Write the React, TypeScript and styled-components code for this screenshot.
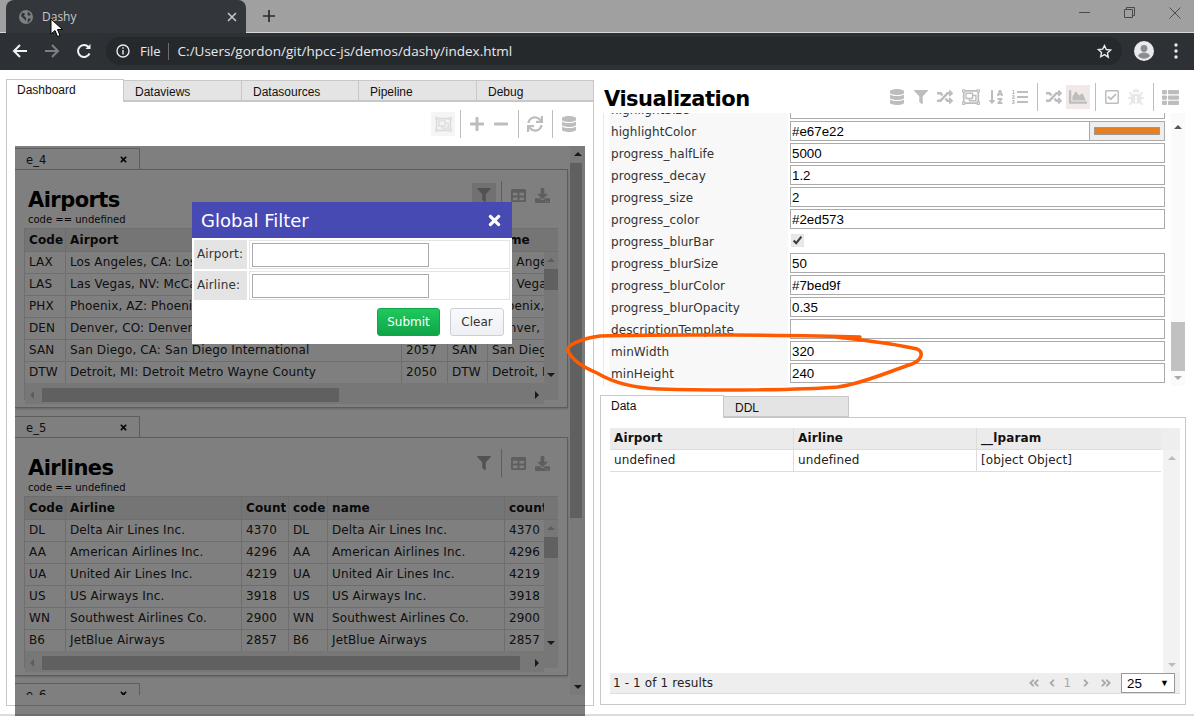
import React from "react";
import styled, { createGlobalStyle } from "styled-components";
import {
  FaAngleDoubleLeft,
  FaAngleDoubleRight,
  FaAngleLeft,
  FaAngleRight,
  FaBug,
  FaChartArea,
  FaDatabase,
  FaDownload,
  FaFilter,
  FaListOl,
  FaMinus,
  FaPlus,
  FaRandom,
  FaRegCheckSquare,
  FaRegObjectGroup,
  FaSortAlphaDown,
  FaSync,
  FaTable,
  FaThList,
  FaTimes,
} from "react-icons/fa";

const UI = `"DejaVu Sans", Verdana, sans-serif`;
const ARIAL = `"Liberation Sans", Arial, sans-serif`;
const CHROME = `"Open Sans", "Noto Sans", sans-serif`;

const GlobalStyle = createGlobalStyle`
  html, body { margin: 0; padding: 0; background: #fff; overflow: hidden; }
  * { box-sizing: border-box; }
`;

const Page = styled.div`
  position: relative;
  width: 1194px;
  height: 718px;
  overflow: hidden;
  font-family: ${UI};
  font-size: 12px;
  letter-spacing: 0.12px;
  color: #222;
`;

/* browser chrome */
const TabStrip = styled.div`
  height: 33px;
  background: #a0a0a0;
  border-bottom: 1px solid #d8d8d8;
  display: flex;
  align-items: stretch;
  padding-left: 6px;
  letter-spacing: 0;
`;

const BrowserTab = styled.div`
  width: 240px;
  height: 33px;
  background: #33363a;
  border-radius: 8px 8px 0 0;
  display: flex;
  align-items: center;
  padding: 0 9px 0 13px;
  gap: 9px;
  color: #c6c8ca;
  font: 12px ${CHROME};
`;

const TabLabel = styled.span`
  flex: 1;
`;

const NewTab = styled.div`
  width: 46px;
  display: flex;
  align-items: center;
  justify-content: center;
`;

const WindowControls = styled.div`
  margin-left: auto;
  width: 140px;
  display: flex;
  align-items: center;
  justify-content: space-between;
  padding: 0 13px 7px 25px;
`;

const BrowserBar = styled.div`
  height: 37px;
  background: #2d3135;
  display: flex;
  align-items: center;
  padding: 0 16px 1px 4px;
  letter-spacing: 0;
`;

const NavButton = styled.div`
  width: 32px;
  height: 24px;
  display: flex;
  align-items: center;
  justify-content: center;
`;

const Omnibox = styled.div`
  flex: 1;
  height: 28px;
  margin: 0 12px 0 6px;
  padding: 0 10px 0 10px;
  background: #26292c;
  border-radius: 14px;
  display: flex;
  align-items: center;
  color: #e8eaed;
  font: 13.5px ${CHROME};
`;

const FileLabel = styled.span`
  margin-left: 10px;
  padding-right: 7px;
  border-right: 1px solid #6a6d70;
  line-height: 17px;
  margin-right: 9px;
  font-size: 13px;
`;

const Grow = styled.span`
  flex: 1;
`;

const AccountIcons = styled.div`
  width: 44px;
  display: flex;
  align-items: center;
  justify-content: space-between;
`;

/* page */
const Main = styled.div`
  height: 646px;
  display: flex;
  border-bottom: 2px solid #dcdcdc;
`;

const LeftPane = styled.div`
  width: 594px;
  padding: 9px 0 0 6px;
`;

const RightPane = styled.div`
  width: 600px;
  display: flex;
  flex-direction: column;
`;

const TabBar = styled.div`
  display: flex;
  align-items: flex-end;
  height: 22px;
`;

const PanelTab = styled.div<{ $active?: boolean; $w: number }>`
  width: ${(p) => p.$w}px;
  height: ${(p) => (p.$active ? 23 : 21)}px;
  margin-bottom: ${(p) => (p.$active ? -1 : 0)}px;
  padding: ${(p) => (p.$active ? "3px 0 0 10px" : "4px 0 0 11px")};
  background: ${(p) => (p.$active ? "#fff" : "#e4e4e4")};
  border: 1px solid #c8c8c8;
  border-left-width: ${(p) => (p.$active ? 1 : 0)}px;
  border-bottom-width: ${(p) => (p.$active ? 0 : 1)}px;
  font: 12px ${ARIAL};
  letter-spacing: 0;
  color: #111;
  position: relative;
`;

const LeftPanel = styled.div`
  width: 588px;
  height: 605px;
  border: 1px solid #c8c8c8;
  padding-left: 8px;
`;

const ToolRow = styled.div<{ $h: number; $pad?: number }>`
  height: ${(p) => p.$h}px;
  display: flex;
  align-items: center;
  justify-content: flex-end;
  padding-right: ${(p) => p.$pad ?? 0}px;
`;

const Tool = styled.div<{ $color?: string; $bg?: string; $size?: number; $w?: number }>`
  width: ${(p) => p.$w ?? 24}px;
  height: 24px;
  display: flex;
  align-items: center;
  justify-content: center;
  color: ${(p) => p.$color ?? "#bdbdbd"};
  background: ${(p) => p.$bg ?? "transparent"};
  font-size: ${(p) => p.$size ?? 16}px;
`;

const ToolSep = styled.div`
  width: 1px;
  height: 28px;
  margin: 0 4.5px;
  background: #bdbdbd;
`;

const Dock = styled.div`
  width: 570px;
  height: 549px;
  display: flex;
  overflow: hidden;
`;

const WidgetColumn = styled.div`
  width: 555px;
  padding-top: 2px;
`;

const Widget = styled.div`
  margin-bottom: 7px;
  &:first-child {
    margin-bottom: 8px;
  }
`;

const WidgetTab = styled.div`
  width: 125px;
  height: 22px;
  padding: 0 11px;
  border: 1px solid #bbb;
  border-left: 0;
  border-bottom: 0;
  background: #fff;
  display: flex;
  align-items: center;
  justify-content: space-between;
  font-size: 11.5px;
  color: #222;
  margin-left: 0;
`;

const WidgetBody = styled.div`
  width: 553px;
  height: 239px;
  border: 1px solid #bbb;
  border-left: 0;
  box-shadow: 0 1px 2px rgba(0, 0, 0, 0.2);
  padding: 0 9px;
  margin-top: -1px;
  background: #fff;
`;

const WidgetHead = styled.div`
  height: 58px;
  display: flex;
  justify-content: space-between;
`;

const Title = styled.h2`
  margin: 18px 0 0 4px;
  font: bold 21px/25px ${UI};
  letter-spacing: -0.55px;
  color: #000;
`;

const SubTitle = styled.div`
  margin: 1px 0 0 4px;
  font-size: 10px;
  letter-spacing: 0;
  line-height: 12px;
  color: #111;
`;

const TableFrame = styled.div`
  width: 534px;
  height: 172px;
  background: #eee;
  border: 1px solid #ddd;
  border-width: 1px 0 0 1px;
`;

const GridRow = styled.div<{ $cols: string; $head?: boolean; $h?: number }>`
  display: grid;
  grid-template-columns: ${(p) => p.$cols};
  height: ${(p) => p.$h ?? 22}px;
  line-height: ${(p) => (p.$h ?? 22) - 1}px;
  border-bottom: 1px solid #ddd;
  background: ${(p) => (p.$head ? "#ebebeb" : "#fff")};
  font-weight: ${(p) => (p.$head ? "bold" : "normal")};
  color: ${(p) => (p.$head ? "#111" : "#222")};
`;

const Cell = styled.div`
  padding: 0 3px 0 4px;
  overflow: hidden;
  white-space: nowrap;
  border-right: 1px solid #ddd;
  &:last-child {
    border-right: 0;
  }
`;

const TableMiddle = styled.div`
  display: flex;
  height: 131px;
`;

const RowClip = styled.div`
  width: 519px;
  height: 131px;
  overflow: hidden;
  background: #fff;
`;

const VTrack = styled.div<{ $w?: number; $bg?: string }>`
  width: ${(p) => p.$w ?? 14}px;
  flex: none;
  height: 100%;
  background: ${(p) => p.$bg ?? "#eee"};
  display: flex;
  flex-direction: column;
  align-items: center;
  justify-content: space-between;
  position: relative;
`;

const Thumb = styled.div`
  position: absolute;
  left: 0;
  right: 0;
  background: #c1c1c1;
`;

const UpArrow = styled.i<{ $color?: string }>`
  margin-top: 6px;
  border: 4px solid transparent;
  border-top-width: 0;
  border-bottom: 4px solid ${(p) => p.$color ?? "#888"};
`;

const DownArrow = styled.i<{ $color?: string }>`
  margin-bottom: 6px;
  border: 4px solid transparent;
  border-bottom-width: 0;
  border-top: 4px solid ${(p) => p.$color ?? "#888"};
`;

const HTrack = styled.div`
  position: relative;
  width: 519px;
  height: 18px;
  margin-top: 3px;
  background: #eee;
  display: flex;
  align-items: center;
  justify-content: space-between;
  padding: 0 5px;
`;

const HThumb = styled.div`
  position: absolute;
  left: 17px;
  top: 2px;
  bottom: 2px;
  background: #c1c1c1;
`;

const LeftArrow = styled.i`
  border: 4px solid transparent;
  border-left-width: 0;
  border-right: 4px solid #bbb;
`;

const RightArrow = styled.i`
  border: 4px solid transparent;
  border-right-width: 0;
  border-left: 4px solid #333;
`;

const DimLayer = styled.div`
  position: absolute;
  left: 15px;
  top: 146px;
  width: 570px;
  height: 570px;
  background: rgba(0, 0, 0, 0.5);
`;

/* modal */
const Modal = styled.div`
  position: absolute;
  left: 192px;
  top: 202px;
  width: 320px;
  height: 142px;
  background: #fff;
`;

const ModalHead = styled.div`
  height: 36px;
  padding: 0 9px;
  background: #474ab3;
  color: #fff;
  display: flex;
  align-items: center;
  justify-content: space-between;
  font: 18px ${UI};
  letter-spacing: 0;
`;

const ModalForm = styled.div`
  padding: 2px;
  display: grid;
  gap: 2px;
`;

const ModalRow = styled.div`
  display: grid;
  grid-template-columns: 53px 1fr;
  gap: 2px;
  height: 29px;
`;

const ModalLabel = styled.div`
  background: #e4e4e4;
  padding-left: 3px;
  line-height: 29px;
  color: #333;
`;

const ModalCell = styled.div`
  border: 1px solid #e4e4e4;
  padding: 2px 0 0 2px;
`;

const ModalInput = styled.input`
  width: 177px;
  height: 24px;
  border: 1px solid #aaa;
  background: #fff;
  display: block;
`;

const ModalActions = styled.div`
  display: flex;
  justify-content: flex-end;
  gap: 10px;
  padding: 6px 8px 0 0;
`;

const ActionButton = styled.button<{ $primary?: boolean }>`
  height: 28px;
  width: ${(p) => (p.$primary ? 63 : 54)}px;
  padding: 0;
  border-radius: 3px;
  border: 1px solid ${(p) => (p.$primary ? "#12a34b" : "#ccd0d5")};
  background: ${(p) =>
    p.$primary
      ? "linear-gradient(#1fc95e, #0fa448)"
      : "linear-gradient(#f8f9fb, #eef0f3)"};
  color: ${(p) => (p.$primary ? "#fff" : "#333")};
  font: 12px ${UI};
`;

/* right pane */
const VisHead = styled.div`
  height: 43px;
  display: flex;
  justify-content: space-between;
  padding: 15px 0 0 10px;
`;

const VisTitle = styled.h1`
  margin: 1px 0 0;
  font: bold 21px/27px ${UI};
  letter-spacing: -0.5px;
  color: #000;
`;

const VisTools = styled.div`
  display: flex;
  align-items: center;
  height: 24px;
  margin-right: 12px;
`;

const PropGrid = styled.div`
  width: 582px;
  height: 273px;
  margin-left: 9px;
  display: flex;
  overflow: hidden;
`;

const PropRows = styled.div`
  width: 568px;
  padding-left: 5px;
  margin-top: -15px;
  border-left: 1px solid #e8e8e8;
`;

const PropRow = styled.div`
  display: grid;
  grid-template-columns: 179px 1fr;
  gap: 2px;
  height: 22px;
  padding-right: 6px;
`;

const PropLabel = styled.div`
  background: #f8f8f8;
  margin-bottom: 2px;
  padding-left: 2px;
  line-height: 24px;
  letter-spacing: 0.08px;
  color: #333;
`;

const PropField = styled.div`
  display: flex;
  height: 20px;
  margin-top: 1px;
`;

const PropInput = styled.input`
  flex: 1;
  min-width: 0;
  height: 20px;
  border: 1px solid #aaa;
  padding: 0 0 0 1px;
  font: 13.33px ${ARIAL};
  color: #000;
  background: #fff;
`;

const ColorButton = styled.div`
  width: 75px;
  height: 20px;
  background: #eee;
  border: 1px solid #aaa;
  border-left: 0;
  padding: 5px 4px;
`;

const Swatch = styled.div<{ $color: string }>`
  height: 8px;
  background: ${(p) => p.$color};
  border: 1px solid #999;
`;

const Check = styled.input`
  margin: 3px 0 0 1px;
  width: 13px;
  height: 13px;
  accent-color: #e8e8e8;
`;

const PropScroll = styled(VTrack)`
  padding-top: 6px;
`;

const LowerTabs = styled(TabBar)`
  margin: 9px 0 0 6px;
`;

const DataPanel = styled.div`
  width: 586px;
  height: 288px;
  margin-left: 6px;
  border: 1px solid #c8c8c8;
  padding: 10px 9px 9px 9px;
`;

const DataFrame = styled.div`
  width: 570px;
  height: 266px;
  display: flex;
  flex-direction: column;
`;

const DataHead = styled.div`
  display: flex;
  background: #eee;
`;

const DataMiddle = styled.div`
  flex: 1;
  display: flex;
`;

const DataRows = styled.div`
  flex: 1;
`;

const Footer = styled.div`
  height: 21px;
  background: #eee;
  border-bottom: 1px solid #ddd;
  display: flex;
  align-items: center;
  justify-content: space-between;
  padding: 0 5px 0 3px;
  color: #222;
`;

const Pager = styled.div`
  display: flex;
  align-items: center;
  color: #aaa;
  font-size: 12px;
`;

const PageGlyph = styled.span<{ $w: number }>`
  width: ${(p) => p.$w}px;
  display: flex;
  justify-content: center;
`;

const PageSize = styled.div`
  width: 54px;
  height: 20px;
  margin-left: 6px;
  border: 1px solid #999;
  background: #fff;
  padding: 0 5px;
  display: flex;
  justify-content: space-between;
  align-items: center;
  font: 13.33px ${ARIAL};
  color: #000;
`;

const SelectArrow = styled.span`
  font-size: 9px;
`;

const Annotation = styled.svg`
  position: absolute;
  left: 0;
  top: 0;
  pointer-events: none;
`;

const Cursor = styled.svg`
  position: absolute;
  left: 50px;
  top: 18px;
`;

const airportRows = [
  ["LAX", "Los Angeles, CA: Los Angeles International", "2058", "LAX", "Los Angeles"],
  ["LAS", "Las Vegas, NV: McCarran International", "2057", "LAS", "Las Vegas"],
  ["PHX", "Phoenix, AZ: Phoenix Sky Harbor International", "2057", "PHX", "Phoenix, AZ"],
  ["DEN", "Denver, CO: Denver International", "2057", "DEN", "Denver, CO"],
  ["SAN", "San Diego, CA: San Diego International", "2057", "SAN", "San Diego"],
  ["DTW", "Detroit, MI: Detroit Metro Wayne County", "2050", "DTW", "Detroit, MI"],
];

const airlineRows = [
  ["DL", "Delta Air Lines Inc.", "4370"],
  ["AA", "American Airlines Inc.", "4296"],
  ["UA", "United Air Lines Inc.", "4219"],
  ["US", "US Airways Inc.", "3918"],
  ["WN", "Southwest Airlines Co.", "2900"],
  ["B6", "JetBlue Airways", "2857"],
];

const props: [string, string][] = [
  ["highlightSize", ""],
  ["highlightColor", "#e67e22"],
  ["progress_halfLife", "5000"],
  ["progress_decay", "1.2"],
  ["progress_size", "2"],
  ["progress_color", "#2ed573"],
  ["progress_blurBar", "check"],
  ["progress_blurSize", "50"],
  ["progress_blurColor", "#7bed9f"],
  ["progress_blurOpacity", "0.35"],
  ["descriptionTemplate", ""],
  ["minWidth", "320"],
  ["minHeight", "240"],
];

const AIRPORT_COLS = "41px 336px 46px 40px 56px";
const AIRLINE_COLS = "41px 176px 47px 39px 177px 39px";
const DATA_COLS = "184px 183px 184px";

interface MiniTableProps {
  cols: string;
  head: string[];
  rows: string[][];
  thumbTop: number;
  thumbWidth: number;
}

const MiniTable: React.FC<MiniTableProps> = ({ cols, head, rows, thumbTop, thumbWidth }) => (
  <TableFrame>
    <GridRow $cols={cols} $head $h={23}>
      {head.map((h) => (
        <Cell key={h}>{h}</Cell>
      ))}
    </GridRow>
    <TableMiddle>
      <RowClip>
        {rows.map((r) => (
          <GridRow $cols={cols} key={r[0]}>
            {r.map((c, i) => (
              <Cell key={i}>{c}</Cell>
            ))}
          </GridRow>
        ))}
      </RowClip>
      <VTrack>
        <UpArrow $color="#bbb" />
        <Thumb style={{ top: thumbTop, height: 21 }} />
        <DownArrow $color="#333" />
      </VTrack>
    </TableMiddle>
    <HTrack>
      <LeftArrow />
      <HThumb style={{ width: thumbWidth }} />
      <RightArrow />
    </HTrack>
  </TableFrame>
);

interface WidgetCardProps {
  name: string;
  title: string;
  active?: boolean;
  children: React.ReactNode;
}

const WidgetCard: React.FC<WidgetCardProps> = ({ name, title, active, children }) => (
  <Widget>
    <WidgetTab>
      {name}
      <FaTimes size={9} color="#111" />
    </WidgetTab>
    <WidgetBody>
      <WidgetHead>
        <div>
          <Title>{title}</Title>
          <SubTitle>code == undefined</SubTitle>
        </div>
        <ToolRow $h={24} $pad={4} style={{ marginTop: 13 }}>
          <Tool $color="#a5a5a5" $bg={active ? "#e4e0e0" : undefined} $size={14}>
            <FaFilter />
          </Tool>
          <ToolSep />
          <Tool $size={15}>
            <FaTable />
          </Tool>
          <Tool $size={15}>
            <FaDownload />
          </Tool>
        </ToolRow>
      </WidgetHead>
      {children}
    </WidgetBody>
  </Widget>
);

const App: React.FC = () => (
  <Page>
    <GlobalStyle />
    <TabStrip>
      <BrowserTab>
        <svg width="14" height="14" viewBox="0 0 14 14">
          <circle cx="7" cy="7" r="7" fill="#7d7f82" />
          <path d="M3 2.5l3 1-1 2.5 2 1.5v3.5l-2-2-3-3zM9 1.5l3 3-2 1.5-1.5-1.5zM9 8.5h3l-2 3.5-1.5.5z" fill="#33363a" />
        </svg>
        <TabLabel>Dashy</TabLabel>
        <svg width="10" height="10" viewBox="0 0 10 10" stroke="#c6c8ca" strokeWidth="1.6">
          <path d="M1 1l8 8M9 1l-8 8" />
        </svg>
      </BrowserTab>
      <NewTab>
        <svg width="12" height="12" viewBox="0 0 12 12" stroke="#2b2b2b" strokeWidth="1.7">
          <path d="M6 0v12M0 6h12" />
        </svg>
      </NewTab>
      <WindowControls>
        <svg width="11" height="11" viewBox="0 0 11 11" stroke="#4a4a4a">
          <path d="M0 5.5h11" />
        </svg>
        <svg width="11" height="11" viewBox="0 0 11 11" stroke="#4a4a4a" fill="none">
          <path d="M.5 2.5h8v8h-8zM2.5 2.5v-2h8v8h-2" />
        </svg>
        <svg width="12" height="12" viewBox="0 0 12 12" stroke="#4a4a4a">
          <path d="M.5.5l11 11M11.5.5l-11 11" />
        </svg>
      </WindowControls>
    </TabStrip>
    <BrowserBar>
      <NavButton>
        <svg width="16" height="16" viewBox="0 0 16 16" fill="none" stroke="#f2f3f4" strokeWidth="2">
          <path d="M15 8H2M8 2L2 8l6 6" />
        </svg>
      </NavButton>
      <NavButton>
        <svg width="16" height="16" viewBox="0 0 16 16" fill="none" stroke="#7d8083" strokeWidth="2">
          <path d="M1 8h13M8 2l6 6-6 6" />
        </svg>
      </NavButton>
      <NavButton>
        <svg width="16" height="16" viewBox="0 0 16 16" fill="none" stroke="#f2f3f4" strokeWidth="2">
          <path d="M13.5 10.5A6 6 0 1 1 12.500 4" />
          <path d="M14.5 1v5h-5z" fill="#f2f3f4" stroke="none" />
        </svg>
      </NavButton>
      <Omnibox>
        <svg width="14" height="14" viewBox="0 0 14 14" fill="none" stroke="#e8eaed" strokeWidth="1.4">
          <circle cx="7" cy="7" r="6" />
          <path d="M7 6v4.5M7 3.3v1.5" />
        </svg>
        <FileLabel>File</FileLabel>
        C:/Users/gordon/git/hpcc-js/demos/dashy/index.html
        <Grow />
        <svg width="15" height="15" viewBox="0 0 24 24" fill="none" stroke="#e8eaed" strokeWidth="2.2">
          <path d="M12 2.5l2.9 6.3 6.9.8-5.1 4.7 1.4 6.8L12 17l-6.1 3.4 1.4-6.8-5.1-4.7 6.9-.8z" />
        </svg>
      </Omnibox>
      <AccountIcons>
        <svg width="20" height="20" viewBox="0 0 20 20">
          <circle cx="10" cy="10" r="10" fill="#e8eaed" />
          <circle cx="10" cy="7.5" r="3.4" fill="#8a8d90" />
          <path d="M3.8 15c1.5-2.6 4-3.5 6.2-3.5s4.700.9 6.200 3.500a8.500 8.500 0 0 1-12.400 0z" fill="#8a8d90" />
        </svg>
        <svg width="4" height="16" viewBox="0 0 4 16" fill="#e8eaed">
          <circle cx="2" cy="2" r="1.700" />
          <circle cx="2" cy="8" r="1.700" />
          <circle cx="2" cy="14" r="1.700" />
        </svg>
      </AccountIcons>
    </BrowserBar>
    <Main>
      <LeftPane>
        <TabBar>
          <PanelTab $active $w={118}>Dashboard</PanelTab>
          <PanelTab $w={118}>Dataviews</PanelTab>
          <PanelTab $w={117}>Datasources</PanelTab>
          <PanelTab $w={118}>Pipeline</PanelTab>
          <PanelTab $w={117}>Debug</PanelTab>
        </TabBar>
        <LeftPanel>
          <ToolRow $h={44} $pad={12}>
            <Tool $bg="#f5f5f5" $color="#dcdcdc" $size={17}>
              <FaRegObjectGroup />
            </Tool>
            <ToolSep />
            <Tool><FaPlus /></Tool>
            <Tool><FaMinus /></Tool>
            <ToolSep />
            <Tool><FaSync /></Tool>
            <ToolSep />
            <Tool><FaDatabase /></Tool>
          </ToolRow>
          <Dock>
            <WidgetColumn>
              <WidgetCard name="e_4" title="Airports" active>
                <MiniTable
                  cols={AIRPORT_COLS}
                  head={["Code", "Airport", "Count", "code", "name"]}
                  rows={airportRows}
                  thumbTop={17}
                  thumbWidth={297}
                />
              </WidgetCard>
              <WidgetCard name="e_5" title="Airlines">
                <MiniTable
                  cols={AIRLINE_COLS}
                  head={["Code", "Airline", "Count", "code", "name", "count"]}
                  rows={airlineRows.map((r) => [...r, ...r])}
                  thumbTop={17}
                  thumbWidth={478}
                />
              </WidgetCard>
              <WidgetTab>
                e_6
                <FaTimes size={9} color="#111" />
              </WidgetTab>
            </WidgetColumn>
            <VTrack $w={15} $bg="#f4f4f4">
              <UpArrow $color="#333" />
              <Thumb style={{ top: 17, height: 355, right: 3 }} />
              <DownArrow $color="#333" />
            </VTrack>
          </Dock>
        </LeftPanel>
      </LeftPane>
      <RightPane>
        <VisHead>
          <VisTitle>Visualization</VisTitle>
          <VisTools>
            <Tool><FaDatabase /></Tool>
            <Tool $size={14}><FaFilter /></Tool>
            <Tool><FaRandom /></Tool>
            <Tool $size={18} $w={27}><FaRegObjectGroup /></Tool>
            <Tool><FaSortAlphaDown /></Tool>
            <Tool><FaListOl /></Tool>
            <ToolSep />
            <Tool><FaRandom /></Tool>
            <Tool $bg="#f3e8e8" $size={18}><FaChartArea /></Tool>
            <ToolSep />
            <Tool><FaRegCheckSquare /></Tool>
            <Tool $color="#e8e8e8"><FaBug /></Tool>
            <ToolSep />
            <Tool $size={17}><FaThList /></Tool>
          </VisTools>
        </VisHead>
        <PropGrid>
          <PropRows>
            {props.map(([name, value]) => (
              <PropRow key={name}>
                <PropLabel>{name}</PropLabel>
                <PropField>
                  {value === "check" ? (
                    <Check type="checkbox" defaultChecked />
                  ) : (
                    <PropInput readOnly defaultValue={value} />
                  )}
                  {name === "highlightColor" && (
                    <ColorButton>
                      <Swatch $color={value} />
                    </ColorButton>
                  )}
                </PropField>
              </PropRow>
            ))}
          </PropRows>
          <PropScroll $bg="#fafafa">
            <UpArrow $color="#555" />
            <Thumb style={{ top: 209, height: 49 }} />
            <DownArrow $color="#aaa" />
          </PropScroll>
        </PropGrid>
        <LowerTabs>
          <PanelTab $active $w={124}>Data</PanelTab>
          <PanelTab $w={125}>DDL</PanelTab>
        </LowerTabs>
        <DataPanel>
          <DataFrame>
            <DataHead>
              <GridRow $cols={DATA_COLS} $head $h={22} style={{ width: 551 }}>
                <Cell>Airport</Cell>
                <Cell>Airline</Cell>
                <Cell>__lparam</Cell>
              </GridRow>
            </DataHead>
            <DataMiddle>
              <DataRows>
                <GridRow $cols={DATA_COLS} style={{ width: 551 }}>
                  <Cell>undefined</Cell>
                  <Cell>undefined</Cell>
                  <Cell>[object Object]</Cell>
                </GridRow>
              </DataRows>
              <VTrack $w={17} $bg="#f2f2f2">
                <UpArrow $color="#bbb" />
                <DownArrow $color="#bbb" />
              </VTrack>
            </DataMiddle>
            <Footer>
              1 - 1 of 1 results
              <Pager>
                <PageGlyph $w={19}><FaAngleDoubleLeft /></PageGlyph>
                <PageGlyph $w={17}><FaAngleLeft /></PageGlyph>
                <PageGlyph $w={15}>1</PageGlyph>
                <PageGlyph $w={21}><FaAngleRight /></PageGlyph>
                <PageGlyph $w={19}><FaAngleDoubleRight /></PageGlyph>
                <PageSize>
                  25
                  <SelectArrow>▼</SelectArrow>
                </PageSize>
              </Pager>
            </Footer>
          </DataFrame>
        </DataPanel>
      </RightPane>
    </Main>
    <DimLayer />
    <Modal>
      <ModalHead>
        Global Filter
        <FaTimes size={17} />
      </ModalHead>
      <ModalForm>
        <ModalRow>
          <ModalLabel>Airport:</ModalLabel>
          <ModalCell><ModalInput readOnly /></ModalCell>
        </ModalRow>
        <ModalRow>
          <ModalLabel>Airline:</ModalLabel>
          <ModalCell><ModalInput readOnly /></ModalCell>
        </ModalRow>
      </ModalForm>
      <ModalActions>
        <ActionButton $primary>Submit</ActionButton>
        <ActionButton>Clear</ActionButton>
      </ModalActions>
    </Modal>
    <Annotation width="1194" height="718" viewBox="0 0 1194 718" fill="none">
      <path
        d="M860 337C800 335 660 334 600 336C585 338 566 344 568 351C572 360 585 368 597 373C612 382 630 388 660 389C720 391 800 390 838 387C865 383 890 371 912 364C922 360 924 352 917 349C890 343 860 340 836 337"
        stroke="#ff5a00"
        strokeWidth="3.500"
        strokeLinecap="round"
      />
    </Annotation>
    <Cursor width="14" height="20" viewBox="0 0 14 20">
      <path d="M1 1v15l4-3.500 2.500 6 2.500-1-2.500-6h5z" fill="#fff" stroke="#000" strokeWidth="1" />
    </Cursor>
  </Page>
);

export default App;
